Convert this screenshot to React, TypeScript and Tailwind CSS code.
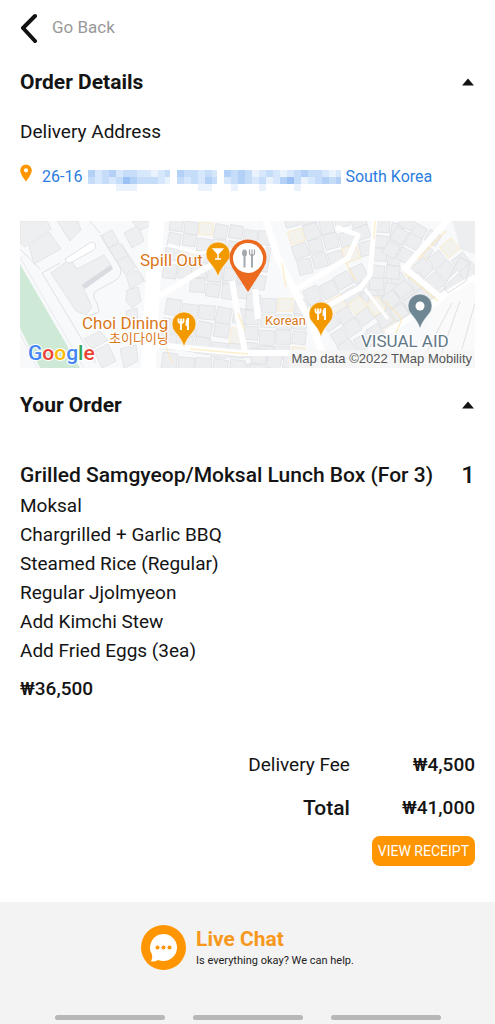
import { useState } from 'react';
import type { ReactNode } from 'react';

const addons = [
  'Moksal',
  'Chargrilled + Garlic BBQ',
  'Steamed Rice (Regular)',
  'Regular Jjolmyeon',
  'Add Kimchi Stew',
  'Add Fried Eggs (3ea)',
];

// Shades of the hidden part of the address, one row of cells per line
const maskedWords = [
  ['dbcdbccbbabc', 'cbcbcedcccba', '----aaa-----'],
  ['dccbcb', 'cbcbdc', '---aa-'],
  ['dcdcabcbabcdccbab', 'bcdcbcabdecabcdcd', '-a---a----a------'],
];

const shades: { [key: string]: string } = {
  '-': 'bg-transparent',
  a: 'bg-[#eaf2fd]',
  b: 'bg-[#d8e8fc]',
  c: 'bg-[#c6ddfa]',
  d: 'bg-[#b3d1f7]',
  e: 'bg-[#9cc2f5]',
};

// Blocks of houses: x, y, rotation, columns, rows, cell size
const blocks = [
  [150, -4, 8, 7, 4, 15],
  [172, 42, 6, 4, 2, 16],
  [146, 78, 8, 5, 3, 17],
  [142, 132, 6, 6, 2, 17],
  [226, 74, 4, 4, 4, 16],
  [262, -6, -16, 5, 4, 16],
  [282, 72, -27, 4, 2, 17],
  [300, 100, -33, 6, 3, 16],
  [356, -2, 6, 2, 6, 15],
  [384, -8, 30, 3, 3, 15],
  [392, 48, -40, 3, 3, 17],
  [346, 84, -33, 4, 2, 16],
  [232, 128, 8, 4, 2, 16],
];

const roads = [
  { d: 'M137 -4L133 60L128 150', width: 15 },
  { d: 'M138 76L182 49L200 40', width: 6 },
  { d: 'M245 -4L258 37L275 71L292 104L308 147', width: 7 },
  { d: 'M275 69L328 37L338 14L316 6', width: 5 },
  { d: 'M355 -4L350 54L340 67L302 88', width: 5 },
  { d: 'M430 -4L385 47L420 76L455 56', width: 6 },
  { d: 'M136 124L221 132L300 132', width: 6 },
  { d: 'M212 60L218 95L225 131', width: 6 },
  { d: 'M235 68L238 98', width: 6 },
  { d: 'M366 112L424 76', width: 6 },
  { d: 'M345 68L368 98', width: 3 },
  { d: 'M148 24L178 32L246 26', width: 3 },
];

const leftBuildings = [
  '0,0 27,0 31,8 5,26 0,22',
  '9,25 29,11 41,28 14,43',
  '37,0 58,0 61,9 50,20',
  '31,52 50,38 57,48 84,34 91,44 62,64 72,86 66,94 56,90',
  '82,14 92,9 99,21 88,27',
  '89,27 99,22 108,34 96,40',
  '97,41 108,35 115,47 105,53',
  '104,12 118,4 124,20 112,27',
  '112,0 130,0 130,5 120,9',
  '106,54 116,49 124,60 110,68',
  '107,69 118,66 121,80 112,87 106,80',
  '106,90 117,87 118,102 108,104',
  '64,118 80,110 88,119 72,128',
  '74,130 88,123 96,140 82,147',
  '100,128 116,124 118,140 104,147',
];

function Collapsible({ title, children }: { title: string; children: ReactNode }) {
  const [open, setOpen] = useState(true);

  return (
    <section>
      <h2>
        <button
          type="button"
          aria-expanded={open}
          onClick={() => setOpen(!open)}
          className="flex w-full items-center justify-between text-left text-[21px] leading-7 font-bold"
        >
          {title}
          <svg viewBox="0 0 14 8" className={open ? 'h-2 w-3.5' : 'h-2 w-3.5 rotate-180'} aria-hidden="true">
            <path d="M7 0.5L13 7.5H1Z" fill="currentColor" />
          </svg>
        </button>
      </h2>
      {open && children}
    </section>
  );
}

function MapPin({ x, y, color, children }: { x: number; y: number; color: string; children: ReactNode }) {
  return (
    <g transform={`translate(${x} ${y})`}>
      <path
        d="M0 23C-1.500 17-4.500 13.500-8.500 8.500A12 12 0 1 1 8.500 8.500C4.500 13.500 1.500 17 0 23Z"
        fill={color}
        stroke="#fff"
        strokeWidth="0.600"
      />
      {children}
    </g>
  );
}

function Cutlery() {
  return (
    <g fill="none" stroke="#fff">
      <path d="M-5.500 -5.500V-3Q-5.500 -1 -3 -1Q-0.500 -1 -0.500 -3V-5.500M-3 -5.500V6" strokeWidth="1.800" />
      <path d="M4 -6V6M3.500 -5Q2 -3 2.500 1H4" strokeWidth="2" />
    </g>
  );
}

function AddressMap() {
  return (
    <svg viewBox="0 0 455 147" className="block w-full font-[Roboto,'Noto_Sans_CJK_KR',sans-serif]" role="img" aria-label="Delivery map">
      <rect width="455" height="147" fill="#f8f9fa" />
      <path d="M0 43L60 147H20L0 107Z" fill="#ceead6" />
      <path d="M0 36L64 147M0 112L17 147" stroke="#e8eaed" fill="none" />
      <g fill="#eeeff0" stroke="#dfe1e4" strokeWidth="0.800">
        {leftBuildings.map((points) => (
          <polygon key={points} points={points} />
        ))}
      </g>
      <path d="M62 64L91 44L93 48L65 68Z" fill="#d8dbdf" />
      <g fill="none" stroke="#dfe1e4">
        <path d="M45 38L68 23Q73 19 75 23Q77 27 72 30L52 41Q47 44 45 38Z" fill="#fff" />
        <path d="M40 42L22 52L76 142M80 14L100 46Q103 54 96 59L76 70Q71 74 77 82L79 91L66 96" />
        <path d="M101 22L127 63L123 147M70 0L80 12M0 28L20 48" />
      </g>
      {blocks.map(([x, y, rot, cols, rows, size]) => (
        <g key={`${x}-${y}`} transform={`translate(${x} ${y}) rotate(${rot})`}>
          {Array.from({ length: cols * rows }, (_, i) => {
            const col = i % cols;
            const row = Math.floor(i / cols);
            const wobble = (i * 7 + x) % 4;
            const yellow = (i * 5 + y + 20) % 13 === 0;
            return (
              <rect
                key={i}
                x={col * size + wobble / 2}
                y={row * size + ((i * 3) % 4) - 1}
                width={size - 1 - wobble / 2}
                height={size - 1 - (i % 3)}
                transform={`rotate(${wobble * 2 - 3} ${col * size} ${row * size})`}
                fill={yellow ? '#f4f2ec' : '#edeef0'}
                stroke={yellow ? '#fbebc8' : '#dfe1e5'}
                strokeWidth="0.800"
              />
            );
          })}
        </g>
      ))}
      <path d="M432 -2H457V34L440 28Z" fill="#edeef0" />
      <path d="M420 76L455 54V147H392Z" fill="#fafafb" />
      <g fill="none" stroke="#fff" strokeLinejoin="round">
        {roads.map((road) => (
          <path key={road.d} d={road.d} strokeWidth={road.width} />
        ))}
      </g>
      <g fill="none" stroke="#fce8b8" strokeWidth="1.500" opacity="0.700">
        <path d="M384 52L418 80M398 38L426 10M326 42L336 60M365 80L382 98L376 112M262 42L266 66M355 0L354 18M146 126L152 142M170 128L228 133M218 92L224 108" />
      </g>
      <g fill="none" stroke="#dfe1e4">
        <path d="M424 66L440 36L450 42L446 60L428 72Z" />
        <path d="M432 82L404 136M440 80L418 142M455 82L442 128" />
      </g>

      <g fill="#d9771b" stroke="#fff" strokeWidth="2.500" strokeLinejoin="round" className="[paint-order:stroke]">
        <text x="120" y="45" fontSize="17">Spill Out</text>
        <text x="62" y="108" fontSize="17">Choi Dining</text>
        <text x="89" y="122" fontSize="13">초이다이닝</text>
        <text x="245" y="104" fontSize="13">Korean</text>
        <text x="341" y="126" fontSize="17" fill="#5f7886">VISUAL AID</text>
      </g>

      <MapPin x={198} y={33} color="#f29900">
        <path d="M-4.500 -5H4.500L0 0ZM0 0V5M-3 5H3" fill="#fff" stroke="#fff" strokeWidth="1.500" />
      </MapPin>
      <MapPin x={164} y={103} color="#f29900">
        <Cutlery />
      </MapPin>
      <MapPin x={301} y={93} color="#f29900">
        <Cutlery />
      </MapPin>
      <MapPin x={400} y={85} color="#6f8793">
        <circle r="4.500" fill="#fff" />
      </MapPin>

      {/* Restaurant marker */}
      <path d="M228 71L212.500 47A18.500 18.500 0 1 1 243.500 47Z" fill="#ec6a1e" />
      <circle cx="228" cy="37" r="15" fill="#fff" />
      <g stroke="#a4a9ad" fill="#a4a9ad">
        <path d="M224.500 33V46.500M232 33V46.500" strokeWidth="2" />
        <ellipse cx="224.500" cy="32" rx="2.500" ry="3.500" stroke="none" />
        <path d="M229.500 28.500V32Q229.500 34.500 232 34.500Q234.500 34.500 234.500 32V28.500M232 28.500V34" fill="none" strokeWidth="1.200" />
      </g>

      <text x="8" y="139" fontSize="21" fontWeight="500" stroke="#fff" strokeWidth="2" className="[paint-order:stroke]">
        <tspan fill="#4285f4">G</tspan>
        <tspan fill="#ea4335">o</tspan>
        <tspan fill="#fbbc04">o</tspan>
        <tspan fill="#4285f4">g</tspan>
        <tspan fill="#34a853">l</tspan>
        <tspan fill="#ea4335">e</tspan>
      </text>
      <rect x="269" y="129" width="186" height="18" fill="#f5f5f5" opacity="0.700" />
      <text x="452" y="142" fontSize="13" textAnchor="end" fill="#555" className="font-['Liberation_Sans',sans-serif]">
        Map data ©2022 TMap Mobility
      </text>
    </svg>
  );
}

function MaskedAddress() {
  return (
    <span className="flex gap-[7px]" aria-hidden="true">
      {maskedWords.map((rows, w) => (
        <span key={w} className="flex flex-col pt-1.5">
          {rows.map((row, r) => (
            <span key={r} className="flex">
              {row.split('').map((cell, i) => (
                <span key={i} className={`h-[7px] w-[7px] last:w-[5px] ${shades[cell]}`} />
              ))}
            </span>
          ))}
        </span>
      ))}
    </span>
  );
}

export default function App() {
  return (
    <div className="flex min-h-screen flex-col bg-white font-[Roboto,'Noto_Sans_CJK_KR',sans-serif] text-[#141414]">
      <main className="flex-1 px-5 pt-2.5">
        <button type="button" className="flex h-9 items-center gap-3.5 text-[17px] text-[#999]">
          <svg viewBox="0 0 18 30" className="h-[30px] w-[18px] text-[#111]" aria-hidden="true">
            <path d="M15 3L3 15L15 28" fill="none" stroke="currentColor" strokeWidth="4" strokeLinecap="round" strokeLinejoin="round" />
          </svg>
          Go Back
        </button>

        <div className="mt-[22px]">
          <Collapsible title="Order Details">
            <h3 className="mt-[22px] text-[19px] leading-7">Delivery Address</h3>
            <a href="#map" className="mt-4 flex h-[30px] items-center text-base text-[#2b7de0]">
              <svg viewBox="0 0 12 18" className="mr-2.5 mb-2 h-[18px] w-3 shrink-0" aria-hidden="true">
                <path d="M6 0.500A5.800 5.800 0 0 0 0.200 6.300C0.200 10.500 6 17.500 6 17.500S11.800 10.500 11.800 6.300A5.800 5.800 0 0 0 6 0.500ZM6 4.200A2.100 2.100 0 1 1 6 8.400A2.100 2.100 0 0 1 6 4.200Z" fill="#ff9500" fillRule="evenodd" />
              </svg>
              <span className="mr-1.5">26-16</span>
              <MaskedAddress />
              <span className="ml-1 whitespace-nowrap">South Korea</span>
            </a>
            <div id="map" className="mt-[29px]">
              <AddressMap />
            </div>
          </Collapsible>
        </div>

        <div className="mt-[23px]">
          <Collapsible title="Your Order">
            <div className="mt-10 flex items-center justify-between text-[21px] leading-8 font-medium">
              <h3>Grilled Samgyeop/Moksal Lunch Box (For 3)</h3>
              <span className="text-2xl">1</span>
            </div>
            <ul className="text-[19px] leading-[29px]">
              {addons.map((addon) => (
                <li key={addon}>{addon}</li>
              ))}
            </ul>
            <p className="mt-2.5 text-[19px] leading-7 font-medium">₩36,500</p>

            <dl className="mt-12 grid grid-cols-[1fr_auto] items-center gap-x-[52px] gap-y-[15px] text-right text-[19px] leading-7">
              <dt>Delivery Fee</dt>
              <dd className="font-medium">₩4,500</dd>
              <dt className="text-[21px] font-medium">Total</dt>
              <dd className="font-medium">₩41,000</dd>
            </dl>
            <div className="mt-3.5 flex justify-end">
              <button type="button" className="h-[30px] rounded-lg bg-[#ff9500] px-1.5 text-sm whitespace-nowrap text-white">
                VIEW RECEIPT
              </button>
            </div>
          </Collapsible>
        </div>
      </main>

      <footer className="mt-9 bg-[#f3f3f3] pt-[21px]">
        <button type="button" className="mx-auto flex items-center gap-2.5 text-left">
          <svg viewBox="0 0 45 45" className="h-[45px] w-[45px]" aria-hidden="true">
            <circle cx="22.500" cy="22.500" r="22.500" fill="#ff9500" />
            <path d="M22.500 9A13.500 13.500 0 0 1 22.500 36Q19.500 36 17 35Q14 37 10 36.500Q12 33 11 29.500A13.500 13.500 0 0 1 22.500 9Z" fill="#fff" />
            <g fill="#ff9500">
              <circle cx="16.500" cy="22.500" r="2" />
              <circle cx="22.500" cy="22.500" r="2" />
              <circle cx="28.500" cy="22.500" r="2" />
            </g>
          </svg>
          <span className="pt-1">
            <span className="block text-[21px] leading-6 font-bold text-[#f7981d]">Live Chat</span>
            <span className="block text-[11px] leading-5 text-[#222]">Is everything okay? We can help.</span>
          </span>
        </button>
        <div className="mt-11 flex justify-center gap-7 pb-[7px]">
          <span className="h-[5px] w-[110px] rounded-full bg-[#b7b7b7]" />
          <span className="h-[5px] w-[110px] rounded-full bg-[#b7b7b7]" />
          <span className="h-[5px] w-[110px] rounded-full bg-[#b7b7b7]" />
        </div>
      </footer>
    </div>
  );
}
